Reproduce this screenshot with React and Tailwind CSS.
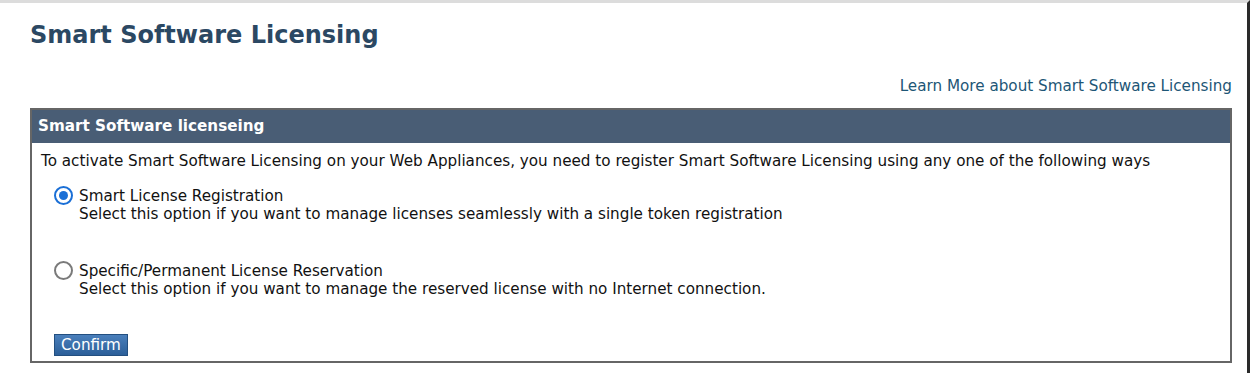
import { useState } from "react";

const FONT = { fontFamily: '"DejaVu Sans", Verdana, sans-serif' };

const options = [
  {
    id: "smart",
    title: "Smart License Registration",
    desc: "Select this option if you want to manage licenses seamlessly with a single token registration",
  },
  {
    id: "slr",
    title: "Specific/Permanent License Reservation",
    desc: "Select this option if you want to manage the reserved license with no Internet connection.",
  },
];

export default function App() {
  const [choice, setChoice] = useState("smart");

  return (
    <div
      className="h-[373px] w-[1250px] overflow-hidden bg-white border-t-[3px] border-[#dcdcdc] border-r-[3px] border-r-[#2a2a2a] text-[#111]"
      style={FONT}
    >
      <div className="pl-[30px] pr-[15px]">
        <h1 className="mt-[16px] text-[24px] leading-[32px] font-bold text-[#2b4863]">
          Smart Software Licensing
        </h1>

        <div className="mt-[26px] flex justify-end">
          <a href="#" className="text-[15.2px] leading-[18px] text-[#1d5676]">
            Learn More about Smart Software Licensing
          </a>
        </div>

        {/* Licensing box */}
        <div className="mt-[13px] border-[2px] border-[#666]">
          <div className="bg-[#495d75] px-[6px] h-[33px] flex items-center text-white text-[15.2px] font-bold">
            Smart Software licenseing
          </div>

          <div className="px-[9px] pt-[9px] pb-[5px] text-[15.2px] leading-[18px]">
            <p>
              To activate Smart Software Licensing on your Web Appliances, you need to register Smart Software Licensing using any one of the following ways
            </p>

            <div className="mt-[17px] pl-[13px] space-y-[39px]">
              {options.map((o) => (
                <label key={o.id} className="flex items-start gap-[6px] cursor-pointer">
                  <span className="mt-[-1px] w-[19px] h-[19px] rounded-full flex items-center justify-center shrink-0">
                    {choice === o.id ? (
                      <span className="w-[19px] h-[19px] rounded-full border-[2px] border-[#1a6fd6] flex items-center justify-center">
                        <span className="w-[9px] h-[9px] rounded-full bg-[#1a6fd6]" />
                      </span>
                    ) : (
                      <span className="w-[19px] h-[19px] rounded-full border-[2px] border-[#7a7a7a]" />
                    )}
                  </span>
                  <input
                    type="radio"
                    name="lic"
                    className="hidden"
                    checked={choice === o.id}
                    onChange={() => setChoice(o.id)}
                  />
                  <span>
                    <span className="block">{o.title}</span>
                    <span className="block">{o.desc}</span>
                  </span>
                </label>
              ))}
            </div>

            <button className="mt-[36px] ml-[13px] h-[22px] px-[6px] text-[15.2px] leading-[20px] text-white bg-gradient-to-b from-[#4a7fbb] to-[#2c5f99] border border-[#234f80]">
              Confirm
            </button>
          </div>
        </div>
      </div>
    </div>
  );
}
